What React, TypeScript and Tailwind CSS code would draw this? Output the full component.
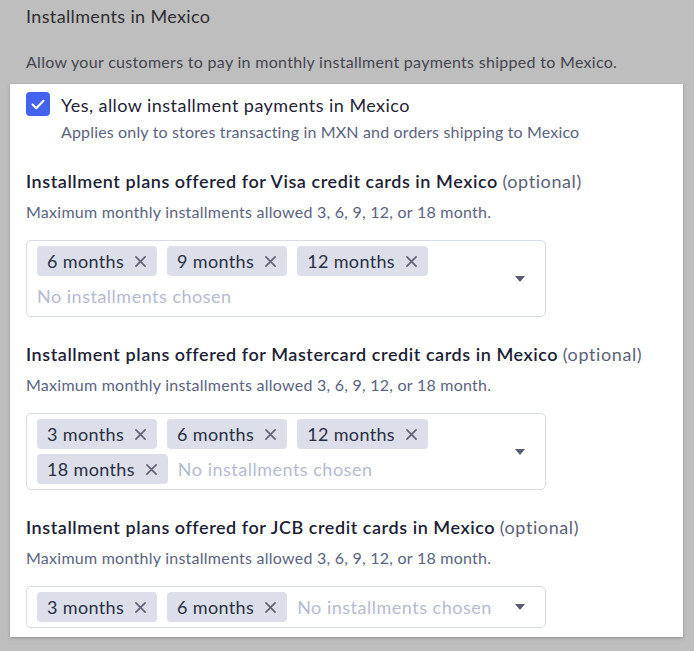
type Plan = {
  card: string;
  chosen: string[];
};

const plans: Plan[] = [
  { card: 'Visa', chosen: ['6 months', '9 months', '12 months'] },
  { card: 'Mastercard', chosen: ['3 months', '6 months', '12 months', '18 months'] },
  { card: 'JCB', chosen: ['3 months', '6 months'] },
];

function Chip({ label }: { label: string }) {
  return (
    <span className="flex h-[30px] items-center gap-[11px] rounded-[4px] bg-[#dcdfe9] pl-[10px] pr-[11px] text-[18px] leading-none tracking-[0.35px] text-[#2a2f45]">
      {label}
      <svg width="11" height="11" viewBox="0 0 12 12" fill="none">
        <path d="M1 1l10 10M11 1L1 11" stroke="#5e6277" strokeWidth="1.8" strokeLinecap="round" />
      </svg>
    </span>
  );
}

function PlanSelect({ plan }: { plan: Plan }) {
  return (
    <div className="mt-[25px]">
      <h3 className="text-[18px] leading-[24px] text-[#1c2235]">
        <span className="font-semibold tracking-[0.55px]">Installment plans offered for {plan.card} credit cards in Mexico</span>{' '}
        <span className="tracking-[0.6px] text-[#5b6178]">(optional)</span>
      </h3>
      <p className="mt-[7px] text-[16px] leading-[24px] tracking-[0.25px] text-[#5b6380]">
        Maximum monthly installments allowed 3, 6, 9, 12, or 18 month.
      </p>
      <div className="mt-[16px] flex w-[520px] items-center rounded-[5px] border border-[#d8dbe8] bg-white pb-[5px] pl-[10px] pt-[5px]">
        <div className="flex flex-1 flex-wrap items-center gap-x-[10px] gap-y-[5px]">
          {plan.chosen.map((c) => (
            <Chip key={c} label={c} />
          ))}
          <span className="flex h-[30px] items-center text-[18px] tracking-[0.5px] text-[#b5bbcf]">No installments chosen</span>
        </div>
        <div className="flex w-[44px] justify-center pr-[6px]">
          <svg width="10" height="6" viewBox="0 0 10 6">
            <path d="M0 0h10l-5 6z" fill="#575b73" />
          </svg>
        </div>
      </div>
    </div>
  );
}

export default function App() {
  return (
    <div
      className="min-h-screen bg-[#bebebe] pb-[14px]"
      style={{ fontFamily: '"Source Sans Pro", Lato, "Noto Sans", sans-serif' }}
    >
      <div className="px-[26px] pt-[4px]">
        <h2 className="text-[18px] leading-[24px] tracking-[0.36px] text-[#2e2e33]">Installments in Mexico</h2>
        <p className="mt-[22px] text-[16px] leading-[24px] tracking-[0.3px] text-[#45454f]">
          Allow your customers to pay in monthly installment payments shipped to Mexico.
        </p>
      </div>

      <div className="ml-[10px] mr-[11px] mt-[10px] bg-white pb-[9px] pl-[16px] pr-[16px] pt-[8px] shadow-[0_1px_3px_rgba(0,0,0,0.25)]">
        <label className="flex gap-[11px]">
          <span className="flex h-[24px] w-[24px] shrink-0 items-center justify-center rounded-[4px] bg-[#4363ee]">
            <svg width="14" height="11" viewBox="0 0 14 11" fill="none">
              <path d="M1.5 5.5l3.8 3.8L12.5 1.8" stroke="white" strokeWidth="2" strokeLinecap="round" strokeLinejoin="round" />
            </svg>
          </span>
          <span className="flex flex-col">
            <span className="text-[18px] leading-[26px] tracking-[0.45px] text-[#1f2436]">Yes, allow installment payments in Mexico</span>
            <span className="mt-[2px] text-[16px] leading-[24px] tracking-[0.16px] text-[#5b6380]">
              Applies only to stores transacting in MXN and orders shipping to Mexico
            </span>
          </span>
        </label>

        {plans.map((p) => (
          <PlanSelect key={p.card} plan={p} />
        ))}
      </div>
    </div>
  );
}
